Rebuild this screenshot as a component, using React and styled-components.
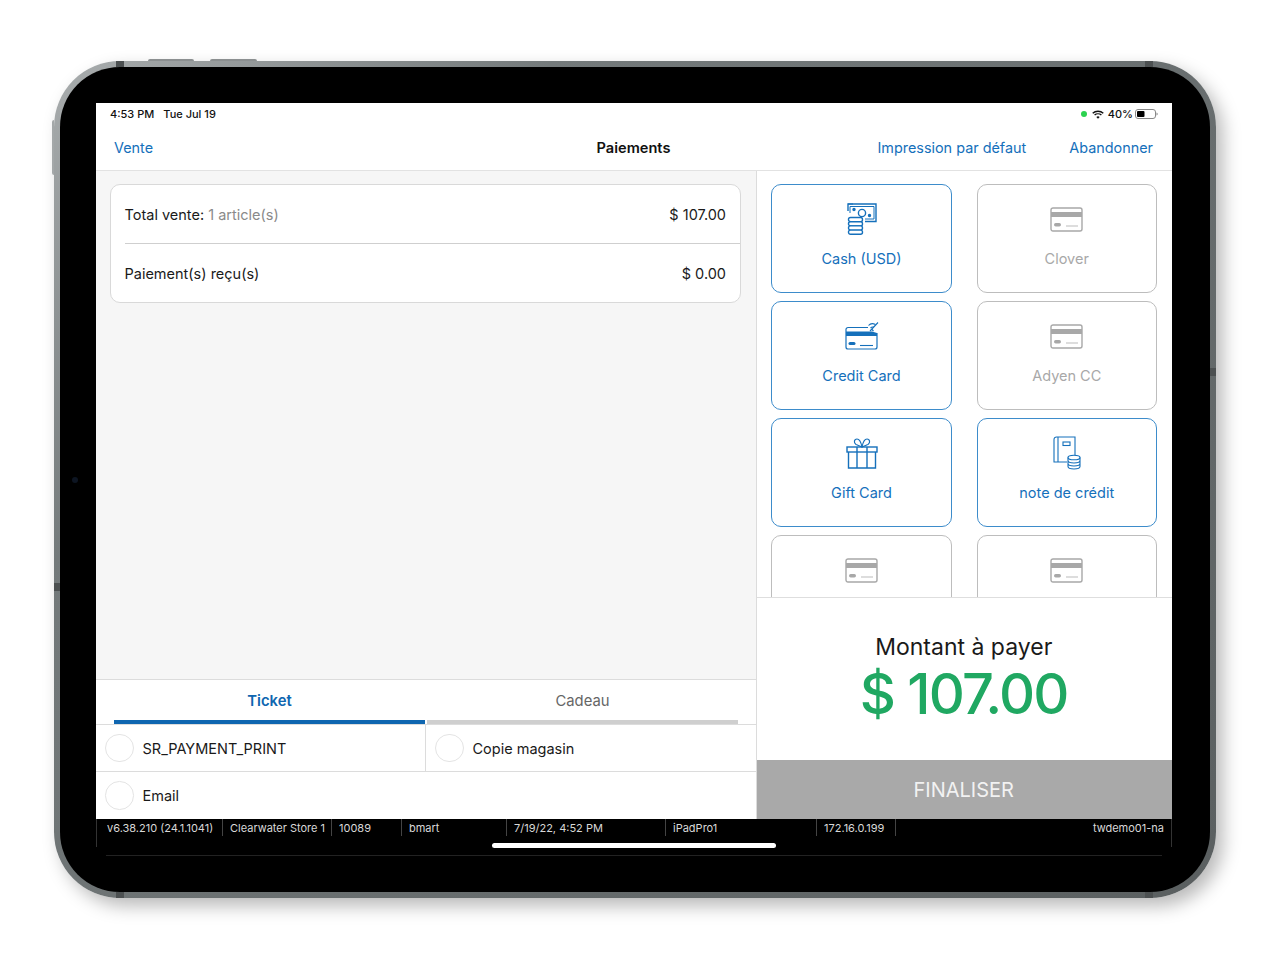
import React from "react";
import styled, { createGlobalStyle } from "styled-components";

const BLUE = "#1570bb";
const GREY = "#a8a8a8";

const GlobalStyle = createGlobalStyle`
  html, body {
    margin: 0;
    padding: 0;
    background: #fff;
  }
  body {
    font-family: Inter, "Liberation Sans", sans-serif;
    -webkit-font-smoothing: antialiased;
  }
`;

const Page = styled.div`
  width: 1280px;
  height: 954px;
  box-sizing: border-box;
  padding: 61px 64px 56px 54px;
  overflow: hidden;
`;

const Device = styled.div`
  position: relative;
  width: 1162px;
  height: 837px;
  box-sizing: border-box;
  padding: 6px;
  border-radius: 66px;
  background: linear-gradient(135deg, #a9adae 0%, #747a7b 25%, #5a5f60 100%);
  box-shadow: 7px 8px 18px rgba(0, 0, 0, 0.28);
`;

const HardButton = styled.div`
  position: absolute;
  top: -2px;
  left: ${(p) => p.$left}px;
  width: ${(p) => p.$width}px;
  height: 2px;
  border-radius: 2px 2px 0 0;
  background: #8b8f90;
`;

const SideButton = styled.div`
  position: absolute;
  top: 59px;
  left: -2px;
  width: 2px;
  height: 55px;
  border-radius: 2px 0 0 2px;
  background: #a4a8a9;
`;

const Band = styled.div`
  position: absolute;
  background: #4c5051;
  ${(p) => (p.$edge === "top" ? "top: 0;" : "")}
  ${(p) => (p.$edge === "bottom" ? "bottom: 0;" : "")}
  ${(p) => (p.$edge === "top" || p.$edge === "bottom"
    ? `left: ${p.$at}px; width: 8px; height: 6px;`
    : `${p.$edge}: 0; top: ${p.$at}px; width: 6px; height: 8px;`)}
`;

const Camera = styled.div`
  position: absolute;
  left: 12px;
  top: 410px;
  width: 6px;
  height: 6px;
  border-radius: 50%;
  background: #0d1522;
`;

const Bezel = styled.div`
  position: relative;
  height: 100%;
  box-sizing: border-box;
  padding: 36px 38px 0 36px;
  border-radius: 60px;
  background: #000;
`;

const Screen = styled.div`
  width: 1076px;
  height: 744px;
  display: flex;
  flex-direction: column;
  background: #fff;
`;

const StatusBar = styled.div`
  height: 22px;
  flex: none;
  display: flex;
  align-items: center;
  justify-content: space-between;
  padding: 0 14px;
  font-size: 11px;
  font-weight: 500;
  color: #111;
`;

const StatusGroup = styled.div`
  display: flex;
  align-items: center;
  gap: ${(p) => p.$gap}px;
`;

const GreenDot = styled.span`
  width: 6px;
  height: 6px;
  margin-right: 1px;
  border-radius: 50%;
  background: #2bd24f;
`;

const Percent = styled.span`
  margin-right: -2px;
`;

const NavBar = styled.div`
  height: 46px;
  flex: none;
  box-sizing: border-box;
  display: grid;
  grid-template-columns: 1fr auto 1fr;
  align-items: center;
  padding: 0 19px 0 18px;
  border-bottom: 1px solid #e2e2e2;
  font-size: 14.4px;
  line-height: 20px;
`;

const NavLink = styled.span`
  color: ${BLUE};
`;

const NavTitle = styled.span`
  font-weight: 600;
  font-size: 14.6px;
  color: #111;
`;

const NavActions = styled.div`
  display: flex;
  justify-content: flex-end;
  gap: 43px;
`;

const Body = styled.div`
  flex: 1;
  min-height: 0;
  display: flex;
`;

const LeftPane = styled.div`
  width: 661px;
  flex: none;
  box-sizing: border-box;
  display: flex;
  flex-direction: column;
  border-right: 1px solid #dcdcdc;
`;

const SummaryArea = styled.div`
  flex: 1;
  padding: 13px 15px 13px 14px;
  background: #f6f6f6;
`;

const SummaryCard = styled.div`
  height: 119px;
  box-sizing: border-box;
  padding-left: 13.5px;
  border: 1px solid #d9d9d9;
  border-radius: 10px;
  background: #fff;
`;

const SummaryRow = styled.div`
  height: 58px;
  display: flex;
  align-items: center;
  justify-content: space-between;
  padding-right: 14px;
  font-size: 14.5px;
  line-height: 19px;
  color: #1a1a1a;
  ${(p) => p.$divided && "border-bottom: 1.5px solid #cfcfcf;"}
`;

const Muted = styled.span`
  color: #8a8a8a;
`;

const Tabs = styled.div`
  height: 46px;
  flex: none;
  box-sizing: border-box;
  display: flex;
  gap: 2px;
  padding: 0 18px 0 18px;
  border-top: 1.5px solid #dcdcdc;
  border-bottom: 1.5px solid #dcdcdc;
`;

const Tab = styled.div`
  flex: 1;
  display: flex;
  align-items: center;
  justify-content: center;
  padding-top: 2px;
  font-size: 14.8px;
  font-weight: ${(p) => (p.$active ? 600 : 400)};
  color: ${(p) => (p.$active ? "#0f66b0" : "#666")};
  border-bottom: 4px solid ${(p) => (p.$active ? "#0f66b0" : "#cfcfcf")};
`;

const OptionRow = styled.div`
  height: 47px;
  flex: none;
  box-sizing: border-box;
  display: flex;
  ${(p) => p.$divided && "border-bottom: 1.5px solid #dcdcdc;"}
`;

const Option = styled.div`
  flex: ${(p) => (p.$divided ? "none" : 1)};
  width: ${(p) => (p.$divided ? "330px" : "auto")};
  box-sizing: border-box;
  display: flex;
  align-items: center;
  gap: 9px;
  padding-left: 9px;
  font-size: 14.5px;
  color: #1a1a1a;
  ${(p) => p.$divided && "border-right: 1.5px solid #dcdcdc;"}
`;

const Radio = styled.span`
  width: 28.5px;
  height: 28.5px;
  box-sizing: border-box;
  border: 1.5px solid #e4e4e4;
  border-radius: 50%;
`;

const RightPane = styled.div`
  flex: 1;
  min-width: 0;
  display: flex;
  flex-direction: column;
`;

const TileArea = styled.div`
  height: 427px;
  flex: none;
  box-sizing: border-box;
  overflow: hidden;
  padding: 13px 14px 0 14px;
  border-bottom: 1.5px solid #dedede;
`;

const TileGrid = styled.div`
  display: grid;
  grid-template-columns: 181px 180.5px;
  grid-auto-rows: 109px;
  column-gap: 24.5px;
  row-gap: 8px;
`;

const Tile = styled.div`
  box-sizing: border-box;
  display: flex;
  flex-direction: column;
  align-items: center;
  border: 1.5px solid ${(p) => (p.$enabled ? "#3d8ccb" : "#bdbdbd")};
  border-radius: 10px;
  color: ${(p) => (p.$enabled ? BLUE : GREY)};
`;

const TileIcon = styled.div`
  height: 36px;
  margin-top: 16px;
  display: flex;
  align-items: center;
  justify-content: center;
`;

const TileLabel = styled.div`
  margin-top: 10px;
  font-size: 14.5px;
  line-height: 24px;
`;

const DuePanel = styled.div`
  flex: 1;
  display: flex;
  flex-direction: column;
  align-items: center;
  padding: 32px 1.500px 0 0;
`;

const DueLabel = styled.div`
  font-size: 23px;
  line-height: 34px;
  color: #1a1a1a;
`;

const DueAmount = styled.div`
  font-size: 56px;
  line-height: 60px;
  font-weight: 500;
  letter-spacing: -1.8px;
  color: #20a862;
`;

const FinishButton = styled.div`
  height: 59px;
  flex: none;
  box-sizing: border-box;
  display: flex;
  align-items: center;
  justify-content: center;
  padding-right: 1.500px;
  background: #a9a9a9;
  font-size: 20px;
  color: #f2f2f2;
`;

const Footer = styled.div`
  height: 28px;
  flex: none;
  display: flex;
  background: #000;
  border-left: 1px solid #333;
  border-right: 1px solid #333;
  font-size: 11px;
  color: #d8d8d8;
`;

const FooterCell = styled.div`
  width: ${(p) => p.$width}px;
  height: 17px;
  flex: none;
  box-sizing: border-box;
  padding: 1px 0 0 ${(p) => p.$pad || 7}px;
  line-height: 16px;
  white-space: nowrap;
  border-right: 1px solid #444;
`;

const FooterEnd = styled.div`
  flex: 1;
  height: 17px;
  box-sizing: border-box;
  padding: 1px 7px 0 0;
  line-height: 16px;
  text-align: right;
`;

const HomeLine = styled.div`
  height: 1px;
  margin: 8px 10px 0 10px;
  width: 1056px;
  background: #222;
`;

const HomeIndicator = styled.div`
  position: absolute;
  left: 432px;
  top: 776px;
  width: 284px;
  height: 5px;
  border-radius: 3px;
  background: #fff;
`;

const CardIcon = ({ muted }) => (
  <svg width="33" height="25" viewBox="0 0 33 25" fill="none" stroke="currentColor">
    <rect x="1" y="1" width="31" height="23" rx="2" strokeWidth="1.4" />
    <rect x="1" y="5" width="31" height="5" fill="currentColor" stroke="none" />
    <rect x="4" y="16" width="7" height="3.4" rx="1.7" fill="currentColor" stroke="none" />
    <path d="M16 19h12" strokeWidth="1.1" opacity={muted ? 0.7 : 1} />
  </svg>
);

const CashIcon = () => (
  <svg width="30" height="32" viewBox="0 0 30 32" fill="none" stroke="currentColor" strokeWidth="1.4">
    <path d="M1 8V1h28v17.5H18" />
    <path d="M1 1h5M3 10V3.5h24v12.5H18" strokeWidth="1" />
    <circle cx="15" cy="10" r="3.6" />
    <circle cx="7" cy="6.5" r="1" fill="currentColor" />
    <circle cx="22.5" cy="12.5" r="1" fill="currentColor" />
    <rect x="1.5" y="14.500" width="14" height="4.200" rx="2" fill="#fff" />
    <rect x="1.5" y="18.700" width="14" height="4.200" rx="2" fill="#fff" />
    <rect x="1.5" y="22.900" width="14" height="4.200" rx="2" fill="#fff" />
    <rect x="1.5" y="27.100" width="14" height="4.200" rx="2" fill="#fff" />
  </svg>
);

const ContactlessCardIcon = () => (
  <svg width="34" height="28" viewBox="0 0 34 28" fill="none" stroke="currentColor">
    <path d="M23 5.5H3a2 2 0 0 0-2 2V25a2 2 0 0 0 2 2h27a2 2 0 0 0 2-2V11" strokeWidth="1.2" />
    <path d="M1 9.5h26l5 1.5v3H1z" fill="currentColor" stroke="none" />
    <rect x="3.5" y="20" width="7" height="3" rx="1.5" fill="currentColor" stroke="none" />
    <path d="M15 23.5h13" strokeWidth="1.1" />
    <path d="M23.5 3.5C25 1.8 28 1.3 30.5 2.5M25.5 6C26.5 5 28 4.8 29 5.3" strokeWidth="1.1" />
    <path d="M25 9l8-8.500M27 7.500l1.500 1.500" strokeWidth="1.1" />
  </svg>
);

const GiftIcon = () => (
  <svg width="32" height="31" viewBox="0 0 32 31" fill="none" stroke="currentColor" strokeWidth="1.4">
    <rect x="1" y="9" width="30" height="5" />
    <path d="M2.500 14v16h27V14M11 9v21M21 9v21" />
    <path d="M16 9c-2-1-3.500-1.500-6-2.500C7.500 5 8 1 11 1c2.500 0 4 3 5 8zM16 9c2-1 3.500-1.500 6-2.500C24.500 5 24 1 21 1c-2.500 0-4 3-5 8z" strokeWidth="1.2" />
  </svg>
);

const NoteIcon = () => (
  <svg width="28" height="34" viewBox="0 0 28 34" fill="none" stroke="currentColor" strokeWidth="1.1">
    <path d="M22 22V1H3.500A2.500 2.500 0 0 0 1 3.500v22.500h13" />
    <path d="M5 1v25" />
    <rect x="10" y="6" width="7" height="3.500" />
    <ellipse cx="21" cy="21.500" rx="6" ry="2.300" fill="#fff" />
    <path d="M15 21.500v9c0 1.300 2.700 2.500 6 2.500s6-1.200 6-2.500v-9M15 24.500c0 1.300 2.700 2.500 6 2.500s6-1.200 6-2.500M15 27.500c0 1.300 2.700 2.500 6 2.500s6-1.200 6-2.500" />
  </svg>
);

const WifiIcon = () => (
  <svg width="12" height="9" viewBox="0 0 12 9" fill="none" stroke="#111" strokeWidth="1.4">
    <path d="M.7 3.200C3.600.5 8.400.5 11.300 3.200" />
    <path d="M2.600 5.100C4.500 3.400 7.500 3.400 9.400 5.100" />
    <path d="M6 8.800L4.300 7a2.500 2.500 0 0 1 3.400 0z" fill="#111" stroke="none" />
  </svg>
);

const BatteryIcon = () => (
  <svg width="23" height="10" viewBox="0 0 23 10" fill="none">
    <rect x=".5" y=".5" width="20" height="9" rx="2.500" stroke="#888" />
    <rect x="2" y="2" width="7.500" height="6" rx="1" fill="#000" />
    <path d="M21.500 3.500c.8.300 1.200.8 1.200 1.500s-.4 1.200-1.200 1.500z" fill="#888" />
  </svg>
);

const tiles = [
  { label: "Cash (USD)", enabled: true, icon: <CashIcon /> },
  { label: "Clover", icon: <CardIcon muted /> },
  { label: "Credit Card", enabled: true, icon: <ContactlessCardIcon /> },
  { label: "Adyen CC", icon: <CardIcon muted /> },
  { label: "Gift Card", enabled: true, icon: <GiftIcon /> },
  { label: "note de crédit", enabled: true, icon: <NoteIcon /> },
  { label: "", icon: <CardIcon muted /> },
  { label: "", icon: <CardIcon muted /> },
];

const footerCells = [
  { text: "v6.38.210 (24.1.1041)", width: 126, pad: 10 },
  { text: "Clearwater Store 1", width: 109 },
  { text: "10089", width: 70 },
  { text: "bmart", width: 105 },
  { text: "7/19/22, 4:52 PM", width: 159 },
  { text: "iPadPro1", width: 151 },
  { text: "172.16.0.199", width: 79 },
];

const App = () => {
  return (
    <Page>
      <GlobalStyle />
      <Device>
        <HardButton $left={94} $width={46} />
        <HardButton $left={156} $width={47} />
        <SideButton />
        <Band $edge="top" $at={62} />
        <Band $edge="top" $at={1091} />
        <Band $edge="bottom" $at={62} />
        <Band $edge="bottom" $at={1091} />
        <Band $edge="left" $at={522} />
        <Band $edge="right" $at={307} />
        <Bezel>
          <Camera />
          <Screen>
            <StatusBar>
              <StatusGroup $gap={9}>
                <span>4:53 PM</span>
                <span>Tue Jul 19</span>
              </StatusGroup>
              <StatusGroup $gap={4}>
                <GreenDot />
                <WifiIcon />
                <Percent>40%</Percent>
                <BatteryIcon />
              </StatusGroup>
            </StatusBar>
            <NavBar>
              <NavLink>Vente</NavLink>
              <NavTitle>Paiements</NavTitle>
              <NavActions>
                <NavLink>Impression par défaut</NavLink>
                <NavLink>Abandonner</NavLink>
              </NavActions>
            </NavBar>
            <Body>
              <LeftPane>
                <SummaryArea>
                  <SummaryCard>
                    <SummaryRow $divided>
                      <span>
                        Total vente: <Muted>1 article(s)</Muted>
                      </span>
                      <span>$ 107.00</span>
                    </SummaryRow>
                    <SummaryRow>
                      <span>Paiement(s) reçu(s)</span>
                      <span>$ 0.00</span>
                    </SummaryRow>
                  </SummaryCard>
                </SummaryArea>
                <Tabs>
                  <Tab $active>Ticket</Tab>
                  <Tab>Cadeau</Tab>
                </Tabs>
                <OptionRow $divided>
                  <Option $divided>
                    <Radio />
                    SR_PAYMENT_PRINT
                  </Option>
                  <Option>
                    <Radio />
                    Copie magasin
                  </Option>
                </OptionRow>
                <OptionRow>
                  <Option>
                    <Radio />
                    Email
                  </Option>
                </OptionRow>
              </LeftPane>
              <RightPane>
                <TileArea>
                  <TileGrid>
                    {tiles.map((tile, i) => (
                      <Tile key={i} $enabled={tile.enabled}>
                        <TileIcon>{tile.icon}</TileIcon>
                        <TileLabel>{tile.label}</TileLabel>
                      </Tile>
                    ))}
                  </TileGrid>
                </TileArea>
                <DuePanel>
                  <DueLabel>Montant à payer</DueLabel>
                  <DueAmount>$ 107.00</DueAmount>
                </DuePanel>
                <FinishButton>FINALISER</FinishButton>
              </RightPane>
            </Body>
            <Footer>
              {footerCells.map((cell) => (
                <FooterCell key={cell.text} $width={cell.width} $pad={cell.pad}>
                  {cell.text}
                </FooterCell>
              ))}
              <FooterEnd>twdemo01-na</FooterEnd>
            </Footer>
          </Screen>
          <HomeLine />
          <HomeIndicator />
        </Bezel>
      </Device>
    </Page>
  );
};

export default App;
